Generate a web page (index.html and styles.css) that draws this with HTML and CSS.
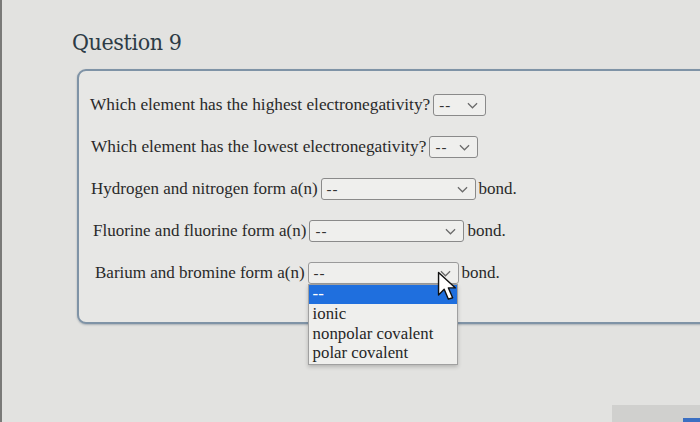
FILE: index.html
```html
<!DOCTYPE html>
<html>
<head>
<meta charset="utf-8">
<link rel="stylesheet" href="styles.css">
</head>
<body>
<div class="page">
  <h1 class="title">Question 9</h1>
  <div class="card">
    <div class="row r1">
      <span>Which element has the highest electronegativity?</span>
      <span class="sel w1"><span class="val">--</span><svg class="chev" viewBox="0 0 12 7"><path d="M1 1 L6 6 L11 1"/></svg></span>
    </div>
    <div class="row r2">
      <span>Which element has the lowest electronegativity?</span>
      <span class="sel w2"><span class="val">--</span><svg class="chev" viewBox="0 0 12 7"><path d="M1 1 L6 6 L11 1"/></svg></span>
    </div>
    <div class="row r3">
      <span>Hydrogen and nitrogen form a(n)</span>
      <span class="sel w3"><span class="val">--</span><svg class="chev" viewBox="0 0 12 7"><path d="M1 1 L6 6 L11 1"/></svg></span>
      <span>bond.</span>
    </div>
    <div class="row r4">
      <span>Fluorine and fluorine form a(n)</span>
      <span class="sel w4"><span class="val">--</span><svg class="chev" viewBox="0 0 12 7"><path d="M1 1 L6 6 L11 1"/></svg></span>
      <span>bond.</span>
    </div>
    <div class="row r5">
      <span>Barium and bromine form a(n)</span>
      <span class="sel w5 open"><span class="val">--</span><svg class="chev" viewBox="0 0 12 7"><path d="M1 1 L6 6 L11 1"/></svg>
        <span class="list">
          <span class="opt active">--</span>
          <span class="opt">ionic</span>
          <span class="opt">nonpolar covalent</span>
          <span class="opt">polar covalent</span>
        </span>
        <svg class="cursor" viewBox="0 0 14 22"><path d="M1 1 L1 17 L5 13 L8 20 L11 19 L8 12 L13 12 Z"/></svg>
      </span>
      <span>bond.</span>
    </div>
  </div>
  <div class="footer"><div class="tab"><div class="blue"></div></div></div>
</div>
</body>
</html>
```
FILE: styles.css
```css
html, body {
  margin: 0;
  padding: 0;
}
body {
  background: #e2e2e0;
  width: 700px;
  height: 422px;
  overflow: hidden;
}
.page {
  box-sizing: border-box;
  height: 422px;
  border-left: 2px solid #7a7a78;
  padding-left: 70px;
  display: flex;
  flex-direction: column;
  overflow: hidden;
}
.title {
  margin: 27px 0 0 0;
  font-family: "DejaVu Serif", serif;
  font-stretch: condensed;
  font-weight: normal;
  font-size: 23px;
  line-height: 30px;
  color: #2d3b45;
  letter-spacing: -0.4px;
}
.card {
  margin: 12px -40px 0 5px;
  height: 255px;
  box-sizing: border-box;
  border: 2px solid #7f93a6;
  border-radius: 9px;
  background: #e7e7e5;
  box-shadow: 0 1px 2px rgba(60, 80, 100, 0.35);
  padding: 22px 0 0 11px;
  font-family: "Liberation Serif", "Times New Roman", serif;
  font-size: 17px;
  color: #2a2a2a;
}
.row {
  display: flex;
  align-items: center;
  gap: 3px;
  height: 24px;
  margin-bottom: 18px;
}
.r1 { font-size: 17.3px; }
.r2 { padding-left: 1px; font-size: 17.3px; }
.r3 { padding-left: 1px; }
.r4 { padding-left: 3px; }
.r5 { padding-left: 5px; margin-bottom: 0; }
.sel {
  position: relative;
  box-sizing: border-box;
  height: 22px;
  border: 1px solid #8a8a8a;
  border-radius: 3px;
  background: #efefed;
  display: flex;
  align-items: center;
  justify-content: space-between;
  padding: 0 7px 0 5px;
  font-size: 15px;
  color: #333;
}
.val { line-height: 1; letter-spacing: 1px; }
.chev {
  width: 11px;
  height: 7px;
  fill: none;
  stroke: #6a6a6a;
  stroke-width: 1.3;
}
.w1 { width: 53px; }
.w2 { width: 49px; }
.w3 { width: 155px; }
.w4 { width: 155px; }
.w5 { width: 151px; }
.open { border-color: #9a9a9a; }
.list {
  position: absolute;
  left: -1px;
  top: 21px;
  width: 150px;
  box-sizing: border-box;
  border: 1px solid #a0a0a0;
  background: #efefed;
  box-shadow: 0 2px 4px rgba(0, 0, 0, 0.2);
  display: flex;
  flex-direction: column;
  font-size: 16.8px;
  color: #262626;
  padding-bottom: 1px;
}
.opt {
  padding-left: 4px;
  height: 19.5px;
  line-height: 19.5px;
}
.opt.active {
  background: #1f6fde;
  color: #ffffff;
  height: 19px;
  line-height: 17px;
}
.cursor {
  position: absolute;
  left: 128px;
  top: 8px;
  width: 20px;
  height: 31px;
  fill: #ffffff;
  stroke: #111111;
  stroke-width: 1;
  stroke-linejoin: round;
}
.footer {
  margin-top: auto;
  display: flex;
  justify-content: flex-end;
}
.tab {
  width: 88px;
  height: 17px;
  background: #d0d0ce;
  display: flex;
  justify-content: flex-end;
  align-items: flex-end;
}
.blue {
  width: 17px;
  height: 4px;
  background: #3b6fc2;
}
```
